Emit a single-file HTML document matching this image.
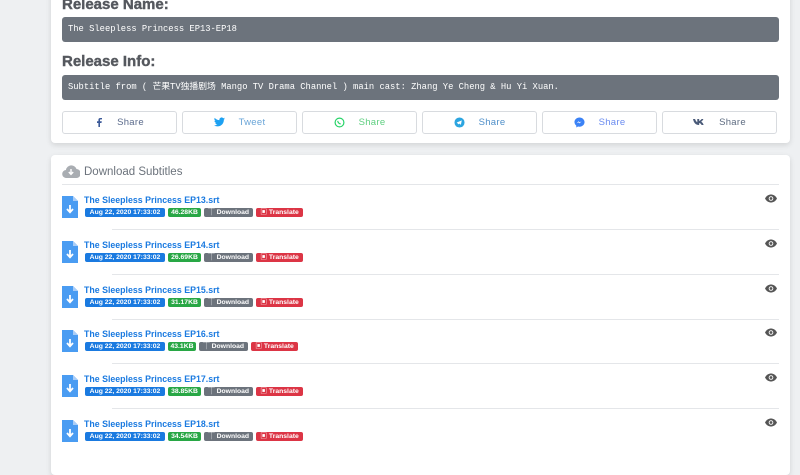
<!DOCTYPE html>
<html><head><meta charset="utf-8"><style>
html,body{margin:0;width:800px;height:464px;overflow:hidden;background:#eef0f2;font-family:"Liberation Sans","Noto Sans CJK SC",sans-serif;}
.card{position:absolute;left:51px;width:739px;background:#fff;border-radius:4px;box-shadow:0 2px 6px rgba(0,0,0,.12);}
h3{position:absolute;left:11px;margin:0;font-size:15px;font-weight:bold;color:#55585e;-webkit-text-stroke:.4px #55585e;}
.pre{position:absolute;left:11px;width:717px;height:25px;background:#6c737c;border-radius:3px;color:#fff;font-family:"Liberation Mono","Noto Sans CJK SC",monospace;font-size:8.8px;line-height:25px;padding-left:6px;box-sizing:border-box;}
.btn{position:absolute;top:121px;width:113px;height:21px;border:1px solid #d8dbdf;border-radius:3px;font-size:9.5px;line-height:21px;text-align:center;letter-spacing:.3px}
.btn svg{vertical-align:middle;margin-right:14px}
.row{position:absolute;left:11px;width:717px;height:45px;}
.row .ic{position:absolute;left:0;top:11px;}
.t{position:absolute;left:22px;top:10px;font-size:8.8px;font-weight:bold;color:#1a7ae0;}
.b{position:absolute;top:23px;height:9px;font-size:6.8px;font-weight:bold;color:#fff;line-height:9px;border-radius:2px;text-align:center;white-space:nowrap;overflow:hidden}
.eye{position:absolute;right:2px;top:9px;}
.sep{position:absolute;left:50px;right:0;top:44px;height:1px;background:#e4e6e9;}
</style></head><body>
<div class="card" style="top:-10px;height:153px;">
<h3 style="top:6px">Release Name:</h3>
<div class="pre" style="top:27px">The Sleepless Princess EP13-EP18</div>
<h3 style="top:63px">Release Info:</h3>
<div class="pre" style="top:85px">Subtitle from ( 芒果TV独播剧场 Mango TV Drama Channel ) main cast: Zhang Ye Cheng &amp; Hu Yi Xuan.</div>
<div class="btn" style="left:11px;color:#5b6b8c"><svg width="8" height="10" viewBox="0 0 8 10"><path d="M5 10V6h1.5l.3-1.7H5V3.2c0-.5.2-.8.8-.8H7V1H5.4C4 1 3.4 1.8 3.4 3v1.3H2V6h1.4v4z" fill="#3b5998"/></svg>Share</div>
<div class="btn" style="left:131px;color:#6aa5d8"><svg width="11" height="10" viewBox="0 0 24 20"><path d="M24 2.4a10 10 0 01-2.8.8A5 5 0 0023.3.5a10 10 0 01-3.1 1.2A4.9 4.9 0 0011.8 6 14 14 0 011.7.9a4.9 4.9 0 001.5 6.6A5 5 0 011 6.9a4.9 4.9 0 003.9 4.8 5 5 0 01-2.2.1 4.9 4.9 0 004.6 3.4A9.9 9.9 0 010 17.3 14 14 0 007.5 19.5c9.1 0 14-7.5 14-14v-.6A10 10 0 0024 2.4z" fill="#1da1f2"/></svg>Tweet</div>
<div class="btn" style="left:251px;color:#5fcf80"><svg width="11" height="11" viewBox="0 0 12 12"><circle cx="6" cy="6" r="4.8" fill="none" stroke="#25d366" stroke-width="1.3"/><path d="M4 4.2c.3 1.5 1.6 3 3.3 3.4" stroke="#25d366" stroke-width="1.2" fill="none"/></svg>Share</div>
<div class="btn" style="left:371px;color:#4f8fc9"><svg width="11" height="11" viewBox="0 0 12 12"><circle cx="6" cy="6" r="5.5" fill="#2ca5e0"/><path d="M3 6l5.5-2.3-1 4.8-1.7-1.3-.9.8z" fill="#fff"/></svg>Share</div>
<div class="btn" style="left:491px;color:#6b8cf0"><svg width="11" height="11" viewBox="0 0 12 12"><path d="M6 .5C3 .5.5 2.7.5 5.5c0 1.6.8 3 2 3.9v2l1.9-1c.5.1 1 .2 1.6.2 3 0 5.5-2.2 5.5-5S9 .5 6 .5z" fill="#3b82f6"/><path d="M2.8 7l2.2-2.4 1.2 1.2 2.1-1.2-2.2 2.4-1.2-1.2z" fill="#fff"/></svg>Share</div>
<div class="btn" style="left:611px;color:#5d6b80"><svg width="12" height="8" viewBox="0 0 14 8"><path d="M0 .5h2.4c.8 2.3 2 3.6 2.6 3.8V.5h2.2v2.3C8.4 2.6 9.4 1.3 10 .5h2.1c-.4 1.4-1.800 2.6-2.6 3.2.9.4 2.3 1.6 2.9 3.8H10c-.5-1.3-1.6-2.3-2.8-2.4v2.4H6.9C3.2 7.5 1 5 0 .5z" fill="#4a5a78"/></svg>Share</div>
</div>
<div class="card" style="top:155px;height:320px;">
<svg style="position:absolute;left:11px;top:10px" width="18" height="13" viewBox="0 0 18 13"><path d="M4.5 13a4 4 0 01-.6-8A5.5 5.5 0 0114.5 4 4.5 4.5 0 0114 13z" fill="#a9adb2"/><path d="M9 4v5M6.8 7L9 9.3 11.2 7" stroke="#fff" stroke-width="1.4" fill="none"/></svg>
<div style="position:absolute;left:33px;top:11px;font-size:11.5px;color:#6c737c;">Download Subtitles</div>
<div style="position:absolute;left:11px;right:11px;top:29px;height:1px;background:#e4e6e9"></div>
<div id="rows"></div>
</div>
<script>
var d=[["13","46.28KB",33],["14","26.69KB",33],["15","31.17KB",33],["16","43.1KB",28],["17","38.85KB",33],["18","34.54KB",33]];
var h="";
d.forEach(function(r,i){var top=30+i*44.8;var dl=117+r[2]+3;
h+='<div class="row" style="top:'+top+'px"><svg class="ic" width="16" height="22" viewBox="0 0 16 22"><path d="M0 0h11l5 5v17H0z" fill="#4a9cf2"/><path d="M11 0v5h5z" fill="#a9cdf7"/><path d="M8 9v7M5 13l3 3.3 3-3.3" stroke="#fff" stroke-width="1.8" fill="none"/></svg>'+
'<div class="t">The Sleepless Princess EP'+r[0]+'.srt</div>'+
'<div class="b" style="left:23px;width:80px;background:#1a7ae0">Aug 22, 2020 17:33:02</div>'+
'<div class="b" style="left:106px;width:'+r[2]+'px;background:#28a745">'+r[1]+'</div>'+
'<div class="b" style="left:'+(dl-11)+'px;width:49px;background:#6c737c">&#9161; Download</div>'+
'<div class="b" style="left:'+(dl+41)+'px;width:47px;background:#dc3545">&#9635; Translate</div>'+
'<svg class="eye" width="12" height="9" viewBox="0 0 12 9"><path d="M0 4.5C1.5 1.5 4 .5 6 .5s4.5 1 6 4c-1.5 3-4 4-6 4S1.5 7.5 0 4.5z" fill="#555"/><circle cx="6" cy="4.5" r="2.3" fill="#fff"/><circle cx="6" cy="4.5" r="1.4" fill="#555"/></svg>'+
(i<5?'<div class="sep"></div>':'')+'</div>';});
document.getElementById("rows").innerHTML=h;
</script>
</body></html>
